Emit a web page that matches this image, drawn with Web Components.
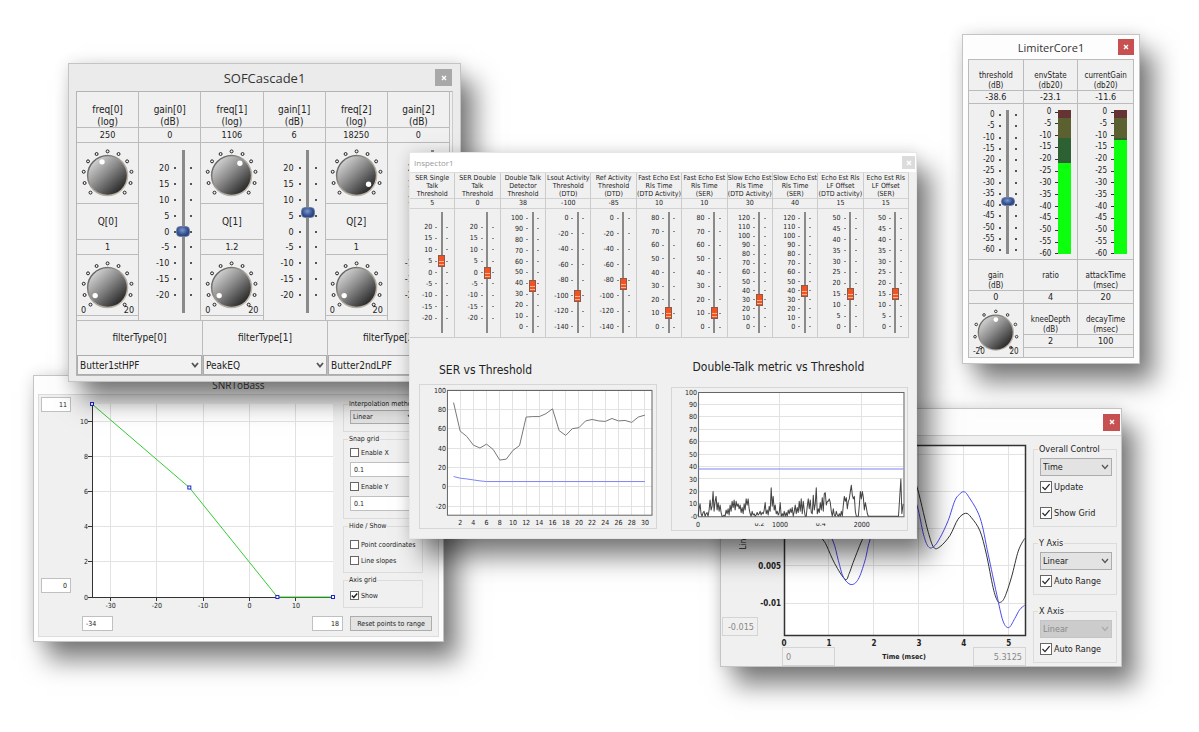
<!DOCTYPE html>
<html lang="en">
<head>
<meta charset="utf-8">
<meta name="viewport" content="width=device-width, initial-scale=1">
<title>Audio tuning inspectors</title>
<style>
  body {
    margin: 0;
    background: #fff;
    color: #222;
    font-family: "DejaVu Sans Condensed", "DejaVu Sans", "Noto Sans", sans-serif;
    font-stretch: condensed;
  }
</style>
</head>
<body>
<tuning-desktop></tuning-desktop>

<script>
// Shared base: every element renders once, from its own attributes.
class BaseElement extends HTMLElement {
    constructor() {
        super();
        this.attachShadow({ mode: 'open' });
    }

    connectedCallback() {
        this.shadowRoot.innerHTML = `<style>${this.styles()}</style>${this.html()}`;
        this.setup();
    }

    setup() {}

    num(name, fallback = 0) {
        return this.hasAttribute(name) ? Number(this.getAttribute(name)) : fallback;
    }

    text(name) {
        return this.getAttribute(name) || '';
    }
}

function scaleValues(from, to, step) {
    const values = [];
    for (let v = from; v >= to; v -= step) {
        values.push(v);
    }
    return values;
}

class ToolWindow extends BaseElement {
    styles() {
        return `
          :host {
            display: block;
            box-sizing: border-box;
            border: 1px solid var(--frame-line, #c4c4c4);
            background: var(--frame, #fdfdfd);
            box-shadow: 14px 18px 24px rgba(0, 0, 0, .5), 0 0 14px rgba(0, 0, 0, .12);
          }
          header {
            display: grid;
            grid-template-columns: 1fr auto 1fr;
            align-items: center;
            height: var(--bar, 24px);
            padding: var(--bar-pad, 0 5px);
            font-family: "Open Sans", "Noto Sans", sans-serif;
            font-stretch: normal;
          }
          h1 {
            grid-column: 2;
            margin: 0;
            font-size: var(--title-size, 11px);
            font-weight: 400;
            color: var(--title-color, #333);
          }
          :host([align="start"]) header { grid-template-columns: 0 auto 1fr; }
          button {
            grid-column: 3;
            justify-self: end;
            width: var(--close-size, 16px);
            height: var(--close-size, 16px);
            padding: 0;
            border: 0;
            background: var(--close, #c75050);
            display: grid;
            place-items: center;
          }
          svg { width: 6px; height: 6px; }
          .body {
            margin: var(--body-margin, 0);
            background: #f0f0f0;
          }
        `;
    }

    html() {
        const heading = this.hasAttribute('heading') ? `<h1>${this.text('heading')}</h1>` : '';
        return `
          <header>
            ${heading}
            <button type="button" aria-label="Close">
              <svg viewBox="0 0 6 6"><path d="M1 1 5 5M5 1 1 5" stroke="#fff" stroke-width="1.4" fill="none"/></svg>
            </button>
          </header>
          <div class="body"><slot></slot></div>
        `;
    }
}

class ParamCell extends BaseElement {
    styles() {
        return `
          :host { display: block; min-width: 0; }
          .name {
            display: flex;
            flex-direction: column;
            align-items: center;
            box-sizing: border-box;
            height: var(--head, 36px);
            padding-top: var(--head-pad, 12px);
            border-bottom: 1px solid var(--line, #bbb);
            font-size: var(--name-size, 10px);
            line-height: var(--name-line, 12px);
            white-space: nowrap;
            overflow-x: visible;
            overflow-y: clip;
          }
          .name span { flex: none; }
          output {
            display: block;
            box-sizing: border-box;
            height: var(--value-row, 15px);
            line-height: calc(var(--value-row, 15px) - 1px);
            border-bottom: 1px solid var(--line, #bbb);
            font-size: var(--value-size, 9px);
            text-align: center;
          }
        `;
    }

    html() {
        const lines = this.text('name').split('|').map(l => `<span>${l}</span>`).join('');
        return `<div class="name">${lines}</div><output>${this.text('value')}</output><slot></slot>`;
    }
}

class LevelSlider extends BaseElement {
    styles() {
        return `
          :host {
            --thumb-w: 14px;
            --thumb-h: 11px;
            --thumb: radial-gradient(ellipse at 45% 35%, #7d97cf, #34508f 55%, #1f3361);
            display: grid;
            grid-template-columns: 1fr auto auto;
            padding: var(--slider-pad, 7px 8px 7px 0);
          }
          :host([kind="block"]) {
            --thumb-w: 7px;
            --thumb-h: 12px;
            --thumb: linear-gradient(#f4521f 5px, #ffb08f 5px 6px, #f4521f 6px 8px, #ffb08f 8px 9px, #f4521f 9px);
          }
          div {
            display: flex;
            flex-direction: column;
            justify-content: space-between;
            font-size: var(--scale-size, 9px);
          }
          span {
            display: flex;
            justify-content: flex-end;
            align-items: center;
            gap: var(--dot-gap, 5px);
            height: 8px;
            line-height: 8px;
          }
          span::after {
            content: "";
            width: 2px;
            height: var(--dot, 2px);
            background: var(--dot-color, #555);
          }
          input {
            appearance: none;
            writing-mode: vertical-lr;
            direction: rtl;
            width: var(--thumb-w);
            height: var(--track, 163px);
            margin: 0 var(--track-gap, 0);
            background: linear-gradient(#8a8a8a, #8a8a8a) center / var(--track-w, 3px) 100% no-repeat;
          }
          input::-webkit-slider-thumb {
            appearance: none;
            box-sizing: border-box;
            width: var(--thumb-w);
            height: var(--thumb-h);
            border: 1px solid #6d7fa5;
            border-radius: 4px;
            background: var(--thumb);
          }
          :host([kind="block"]) input::-webkit-slider-thumb {
            border: 1px solid #8a5a4c;
            border-radius: 0;
          }
        `;
    }

    html() {
        const values = scaleValues(this.num('from'), this.num('to'), this.num('step'));
        return `
          <div>${values.map(v => `<span>${v}</span>`).join('')}</div>
          <input type="range" aria-label="${this.text('label')}" step="any"
            min="${this.num('min', this.num('to'))}" max="${this.num('max', this.num('from'))}" value="${this.num('value')}">
          <div>${values.map(() => '<span></span>').join('')}</div>
        `;
    }

    // Line the scale up with the centre of the thumb at both ends.
    setup() {
        const input = this.shadowRoot.querySelector('input');
        const style = getComputedStyle(input);
        const thumb = parseInt(getComputedStyle(this).getPropertyValue('--thumb-h'), 10);
        const travel = parseInt(style.height, 10) - thumb;
        const range = input.max - input.min;
        const top = Math.round(thumb / 2 - 4 + travel * (input.max - this.num('from')) / range);
        const bottom = Math.floor(thumb / 2 - 4 + travel * (this.num('to') - input.min) / range);
        this.shadowRoot.querySelectorAll('div').forEach(div => {
            div.style.padding = `${top}px 0 ${bottom}px`;
        });
    }
}

class LevelMeter extends BaseElement {
    styles() {
        return `
          :host {
            display: grid;
            grid-template-columns: 1fr 13px;
            padding: 4px 6px 0 0;
          }
          .scale {
            display: flex;
            flex-direction: column;
            justify-content: space-between;
            height: 150px;
            font-size: var(--scale-size, 8px);
          }
          .scale span {
            display: flex;
            justify-content: flex-end;
            align-items: center;
            gap: 4px;
            height: 8px;
            line-height: 8px;
          }
          .scale span::after {
            content: "";
            width: 3px;
            height: 1px;
            background: #333;
          }
          .bar {
            display: flex;
            flex-direction: column;
            justify-content: flex-end;
            margin: 2px 0 4px;
            background: linear-gradient(#663333 8px, #5a6030 8px 28px, #2d6033 28px);
          }
          .bar i {
            height: var(--level);
            background: #0cff0c;
          }
        `;
    }

    html() {
        return `
          <div class="scale">${scaleValues(0, -60, 5).map(v => `<span>${v}</span>`).join('')}</div>
          <div class="bar" role="meter" aria-label="${this.text('label')}" aria-valuemin="-60" aria-valuemax="0"
            aria-valuenow="${this.num('value')}" style="--level: ${this.text('level')}"><i></i></div>
        `;
    }
}

class RotaryKnob extends BaseElement {
    styles() {
        return `
          :host {
            display: grid;
            height: var(--knob-row, 60px);
            border-bottom: 1px solid var(--line, #bbb);
          }
          svg, input, div { grid-area: 1 / 1; }
          svg { width: 100%; display: block; }
          input {
            width: 100%;
            height: 100%;
            margin: 0;
            opacity: 0;
          }
          div {
            display: flex;
            justify-content: space-between;
            align-self: end;
            padding: 0 4px;
            font-size: var(--scale-size, 9px);
            line-height: 10px;
          }
        `;
    }

    html() {
        const count = this.num('dots', 11);
        const dots = [];
        for (let i = 0; i < count; i++) {
            const angle = (-135 + 270 * i / (count - 1)) * Math.PI / 180;
            dots.push(`<circle cx="${24.5 * Math.sin(angle)}" cy="${-24.5 * Math.cos(angle)}" r="1.5"/>`);
        }
        const turn = this.num('angle') * Math.PI / 180;
        const ends = this.hasAttribute('low')
            ? `<div><span>${this.text('low')}</span><span>${this.text('high')}</span></div>` : '';
        return `
          <svg viewBox="-31 -33 62 60">
            <defs>
              <linearGradient id="face" x1=".1" y1=".1" x2=".85" y2=".9">
                <stop offset="0" stop-color="#d8d8d8"/>
                <stop offset=".45" stop-color="#8c8c8c"/>
                <stop offset="1" stop-color="#262626"/>
              </linearGradient>
              <linearGradient id="rim" x1="0" y1="0" x2="1" y2="1">
                <stop offset="0" stop-color="#444"/>
                <stop offset=".5" stop-color="#aaa39b"/>
                <stop offset="1" stop-color="#c9beb2"/>
              </linearGradient>
            </defs>
            <g fill="#f0f0f0" stroke="#222">${dots.join('')}</g>
            <circle r="21" fill="url(#rim)"/>
            <circle r="19.5" fill="url(#face)"/>
            <circle cx="${15 * Math.sin(turn)}" cy="${-15 * Math.cos(turn)}" r="2.7" fill="#fff"/>
          </svg>
          ${ends}
          <input type="range" aria-label="${this.text('label')}" min="-135" max="135" value="${this.num('angle')}">
        `;
    }
}

class DropDown extends BaseElement {
    styles() {
        return `
          :host { display: grid; }
          select, svg { grid-area: 1 / 1; }
          select {
            appearance: none;
            width: 100%;
            min-width: 0;
            height: var(--select-row, 18px);
            margin: 0;
            padding: 0 2px;
            border: 1px solid #acacac;
            border-radius: 0;
            background: var(--select-fill, #e3e3e3);
            color: #222;
            font: inherit;
            font-size: var(--control-size, 9px);
          }
          select:disabled {
            border-color: #c4c4c4;
            background: #ccc;
            color: #8a8a8a;
            opacity: 1;
          }
          svg {
            width: 8px;
            height: 6px;
            align-self: center;
            justify-self: end;
            margin-right: 3px;
            pointer-events: none;
          }
          path { fill: none; stroke: var(--chevron, #555); stroke-width: var(--chevron-w, 1.2); }
        `;
    }

    html() {
        return `
          <select aria-label="${this.text('label')}" ${this.hasAttribute('disabled') ? 'disabled' : ''}>
            <option>${this.text('value')}</option>
          </select>
          <svg viewBox="0 0 8 6"><path d="M1 1 4 4.5 7 1"/></svg>
        `;
    }
}

class CheckItem extends BaseElement {
    styles() {
        return `
          :host { display: block; }
          label {
            display: flex;
            align-items: center;
            gap: 2px;
            height: var(--check, 12px);
            font-size: var(--control-size, 9px);
            white-space: nowrap;
          }
          .box { display: grid; }
          input, svg { grid-area: 1 / 1; }
          input {
            appearance: none;
            box-sizing: border-box;
            width: var(--check, 12px);
            height: var(--check, 12px);
            margin: 0;
            border: 1px solid #666;
            background: #fff;
          }
          svg {
            width: var(--check, 12px);
            height: var(--check, 12px);
            visibility: hidden;
            pointer-events: none;
          }
          path { fill: none; stroke: #222; stroke-width: var(--tick, 1.2); }
          input:checked + svg { visibility: visible; }
        `;
    }

    html() {
        return `
          <label>
            <span class="box">
              <input type="checkbox" ${this.hasAttribute('checked') ? 'checked' : ''}>
              <svg viewBox="0 0 12 12"><path d="M2.5 6 5 8.6 9.6 3.2"/></svg>
            </span>
            ${this.text('label')}
          </label>
        `;
    }
}

class GroupBox extends BaseElement {
    styles() {
        return `
          :host { display: block; }
          fieldset {
            min-width: 0;
            margin: 0;
            padding: var(--group-top, 3px) 4px 7px 6px;
            border: 1px solid #dcdcdc;
          }
          legend {
            padding: 0 1px;
            margin-left: -2px;
            font-size: var(--control-size, 9px);
            line-height: var(--legend, 11px);
            white-space: nowrap;
          }
          .items {
            display: flex;
            flex-direction: column;
            gap: var(--group-gap, 5px);
          }
        `;
    }

    html() {
        return `
          <fieldset>
            <legend>${this.text('label')}</legend>
            <div class="items"><slot></slot></div>
          </fieldset>
        `;
    }
}

class NumberBox extends BaseElement {
    styles() {
        return `
          :host { display: block; }
          input {
            display: block;
            box-sizing: border-box;
            width: 100%;
            height: var(--box-row, 15px);
            padding: 0 3px;
            border: 1px solid #c0c0c0;
            background: #fff;
            color: #222;
            font: inherit;
            font-size: var(--control-size, 9px);
          }
          :host([align="end"]) input { text-align: right; }
          input:disabled {
            border-color: #d4d4d4;
            background: #f0f0f0;
            color: #888;
          }
        `;
    }

    html() {
        return `<input type="text" aria-label="${this.text('label')}" value="${this.text('value')}"
          ${this.hasAttribute('disabled') ? 'disabled' : ''}>`;
    }
}

// Chart settings: size of the drawing, plot area [left, top, width, height], axis ranges and series.
const CHARTS = {
    ser: {
        size: [236, 143], area: [27, 5, 205, 125], x: [0, 31], y: [-29, 100],
        xTicks: Array.from({ length: 15 }, (_, i) => 2 * i + 2),
        yTicks: [100, 80, 60, 40, 20, 0, -20],
        border: '#666', fontSize: 7, labelDrop: 8,
        series: [
            {
                color: '#777',
                points: [87, 57.5, 52, 43, 40, 44, 38.5, 27.5, 28.5, 37.5, 42.5, 72, 72.5, 72.5, 75.5, 80.5, 58, 53, 60, 61,
                    68, 69.5, 68, 67.5, 70.5, 68, 68.5, 66.5, 72, 74].map((y, i) => [i + 1, y])
            },
            { color: '#7d84f5', points: [[1, 10.5], [2, 8.8], [3, 8], [4, 7], [5, 6], [6, 5.3], [30, 5.3]] }
        ]
    },
    doubleTalk: {
        size: [235, 142], area: [26, 4, 205, 124], x: [0, 2510], y: [0, 100],
        xTicks: [0, 1000, 2000],
        yTicks: [100, 90, 80, 70, 60, 50, 40, 30, 20, 10, 0],
        yFormat: v => (v === 0 ? '-0' : String(v)),
        border: '#666', fontSize: 7, labelDrop: 8,
        clipped: [['0.2', 750], ['0.4', 1500]],
        series: [
            { color: '#7d84f5', points: [[0, 38], [2510, 38]] },
            {
                color: '#444',
                points: [
                    0, 6, 10, 2, 0, 3, 4, 0, 2, 3, 0, 5, 13, 5, 8, 20, 4, 12, 16, 5, 11, 4, 9, 3,
                    0, 0, 1, 0, 5, 2, 6, 1, 9, 4, 12, 7, 13, 5, 12, 8, 10, 6, 9, 3,
                    7, 2, 10, 5, 14, 9, 14, 6, 2, 0, 4, 1, 2, 0, 1, 3, 1, 2, 4, 1, 3, 2, 5,
                    11, 2, 5, 1, 8, 4, 23, 8, 16, 5, 9, 2, 4, 1, 3, 11,
                    0, 2, 0, 4, 0, 3, 0, 5, 2, 6, 3, 7, 0, 4, 9, 2, 7, 3, 12, 4, 14, 2, 12, 5,
                    0, 0, 8, 14, 6, 13, 3, 2, 17, 5, 10, 23, 2, 6, 3, 11, 5, 15, 4, 18, 19, 9, 12, 12, 14, 11, 4,
                    0, 6, 1, 0, 4, 1, 0, 2, 0, 4, 0, 9, 16, 12, 15, 6, 12, 14, 20, 25, 17, 14, 16, 4,
                    0, 0, 0, 9, 20, 14, 20, 15, 5, 11, 7, 2, 0
                ].map((y, i) => [i * 12.24, y]).concat([[2449, 0], [2478, 30], [2490, 2], [2506, 10]])
            }
        ]
    },
    snr: {
        size: [271, 221], area: [20, 9, 241, 193], x: [-34, 18], y: [0, 11],
        xTicks: [-30, -20, -10, 0, 10],
        yTicks: [10, 8, 6, 4, 2, 0],
        axes: true, fontSize: 7, labelDrop: 8, yGap: 4,
        series: [
            { color: '#3c3', markers: true, points: [[-34, 11], [-13, 6.24], [6, 0], [18, 0]] }
        ]
    },
    scope: {
        size: [275, 213], area: [26, 9, 241, 190], x: [0, 5.36], y: [-14.3, 11.3],
        xTicks: [0, 1, 2, 3, 4, 5],
        yTicks: [10, 5, 0, -5, -10],
        yFormat: v => (v < 0 ? String(v / 1000) : ''),
        border: '#333', borderWidth: 1.5, fontSize: 8, bold: true, labelDrop: 8, yGap: 3,
        series: [
            {
                color: '#333', smooth: true,
                points: [[0, 1], [0.6, 0.5], [0.87, -1.5], [0.95, -2.3], [1.13, -4.7], [1.36, -6.8], [1.45, -6], [1.54, -4.5],
                    [1.73, -1.6], [2, 2], [2.5, 8], [2.8, 8], [2.96, 5.6], [3.1, 2.2], [3.21, -0.5], [3.33, -2.5], [3.47, -2.4],
                    [3.69, -0.9], [3.87, 1.3], [4.04, 2.1], [4.17, 1.5], [4.36, -0.3], [4.5, -3.4], [4.65, -7.9], [4.74, -9.6],
                    [4.81, -9.9], [4.91, -9.2], [5.06, -6.5], [5.21, -3], [5.35, -1.3]]
            },
            {
                color: '#4a4af0', smooth: true,
                points: [[0, 1], [0.8, 1], [1.08, -1.5], [1.21, -4.3], [1.32, -6.5], [1.49, -7.5], [1.65, -6.8], [1.8, -4.3],
                    [1.91, -1.5], [2.2, 4], [2.7, 7], [2.96, 3.1], [3.1, -0.7], [3.21, -2.4], [3.33, -2.4], [3.47, -1.2],
                    [3.65, 1.1], [3.8, 3.8], [3.91, 4.7], [4, 5], [4.1, 4.4], [4.36, 1.5], [4.54, -3.4], [4.73, -8.8],
                    [4.87, -12.4], [5, -13.3], [5.13, -12.1], [5.24, -10.9], [5.35, -10.3]]
            }
        ]
    }
};

class LinePlot extends BaseElement {
    styles() {
        return `
          :host { display: block; min-width: 0; }
          svg { display: block; width: 100%; }
          text { fill: #222; }
          .crisp { shape-rendering: crispEdges; }
        `;
    }

    html() {
        const c = CHARTS[this.text('chart')];
        const [left, top, width, height] = c.area;
        const bottom = top + height;
        const px = v => left + (v - c.x[0]) / (c.x[1] - c.x[0]) * width;
        const py = v => bottom - (v - c.y[0]) / (c.y[1] - c.y[0]) * height;
        const format = c.yFormat || String;

        const grid = c.xTicks.map(v => `M${px(v)} ${top}V${bottom}`)
            .concat(c.yTicks.map(v => `M${left} ${py(v)}H${left + width}`)).join('');
        const xLabels = c.xTicks.map(v =>
            `<text x="${px(v)}" y="${bottom + c.labelDrop}" dy=".36em" text-anchor="middle">${v}</text>`).join('');
        const yLabels = c.yTicks.filter(v => format(v)).map(v =>
            `<text x="${left - (c.yGap || 1)}" y="${py(v)}" dy=".36em" text-anchor="end">${format(v)}</text>`).join('');

        let frame = '';
        if (c.border) {
            frame = `<rect x="${left + 0.5}" y="${top + 0.5}" width="${width}" height="${height}" fill="none"
              stroke="${c.border}" stroke-width="${c.borderWidth || 1}"/>`;
        }
        if (c.axes) {
            const ticks = c.xTicks.map(v => `M${px(v)} ${bottom}v4`).concat(c.yTicks.map(v => `M${left} ${py(v)}h-4`)).join('');
            frame = `<path class="crisp" d="M${left} ${top}V${bottom}H${left + width}${ticks}" fill="none" stroke="#333"/>`;
        }

        const clipTop = bottom + c.labelDrop - 1;
        const clipped = (c.clipped || []).map(([label, v]) =>
            `<text x="${px(v)}" y="${clipTop}" dy=".36em" text-anchor="middle" clip-path="url(#lower)">${label}</text>`).join('');

        return `
          <svg viewBox="0 0 ${c.size[0]} ${c.size[1]}" font-size="${c.fontSize}" font-weight="${c.bold ? 700 : 400}">
            <clipPath id="lower"><rect x="0" y="${clipTop}" width="${c.size[0]}" height="9"/></clipPath>
            <rect x="${left}" y="${top}" width="${width}" height="${height}" fill="#fff"/>
            <path class="crisp" d="${grid}" stroke="#e2e2e2" fill="none"/>
            ${frame}
            ${c.series.map(s => this.line(s, px, py)).join('')}
            ${xLabels}${yLabels}${clipped}
          </svg>
        `;
    }

    line(series, px, py) {
        const pts = series.points.map(([x, y]) => [px(x), py(y)]);
        let d = `M${pts[0]}`;
        for (let i = 1; i < pts.length; i++) {
            if (!series.smooth) {
                d += `L${pts[i]}`;
                continue;
            }
            const [p0, p1, p2, p3] = [pts[Math.max(i - 2, 0)], pts[i - 1], pts[i], pts[Math.min(i + 1, pts.length - 1)]];
            const c1 = [p1[0] + (p2[0] - p0[0]) / 6, p1[1] + (p2[1] - p0[1]) / 6];
            const c2 = [p2[0] - (p3[0] - p1[0]) / 6, p2[1] - (p3[1] - p1[1]) / 6];
            d += `C${c1} ${c2} ${p2}`;
        }
        const markers = series.markers ? pts.map(([x, y]) =>
            `<rect x="${x - 1.5}" y="${y - 1.5}" width="3" height="3" fill="#fff" stroke="#22d"/>`).join('') : '';
        return `<path d="${d}" fill="none" stroke="${series.color}" stroke-linejoin="round"/>${markers}`;
    }
}

class CascadePanel extends BaseElement {
    styles() {
        return `
          :host { display: block; border: 1px solid #b4b4b4; border-right-color: #ccc; }
          .bands {
            display: grid;
            grid-template-columns: repeat(6, 1fr);
            padding-right: 2px;
            overflow: hidden;
          }
          .col { border-right: 1px solid #bbb; min-height: 227px; }
          .filters {
            display: grid;
            grid-template-columns: repeat(3, 1fr);
            border-top: 1px solid #bbb;
            --select-row: 20px;
            --select-fill: #f2f2f2;
            --control-size: 10px;
            --chevron-w: 1.8;
          }
          .filters div + div { border-left: 1px solid #bbb; }
          .label {
            display: block;
            font-size: 10px;
            line-height: 34px;
            text-align: center;
          }
        `;
    }

    html() {
        const bands = [
            { freq: 250, angle: -22, gain: 0, q: 1, type: 'Butter1stHPF' },
            { freq: 1106, angle: 34, gain: 6, q: 1.2, type: 'PeakEQ' },
            { freq: 18250, angle: 126, gain: 0, q: 1, type: 'Butter2ndLPF' }
        ];
        const columns = bands.map((b, i) => `
          <div class="col">
            <param-cell name="freq[${i}]|(log)" value="${b.freq}">
              <rotary-knob label="freq[${i}]" angle="${b.angle}"></rotary-knob>
            </param-cell>
            <param-cell name="Q[${i}]" value="${b.q}">
              <rotary-knob label="Q[${i}]" angle="-123" low="0" high="20"></rotary-knob>
            </param-cell>
          </div>
          <div class="col">
            <param-cell name="gain[${i}]|(dB)" value="${b.gain}">
              <level-slider label="gain[${i}]" from="20" to="-20" step="5" min="-24" max="24" value="${b.gain}"></level-slider>
            </param-cell>
          </div>`).join('');
        const filters = bands.map((b, i) => `
          <div>
            <span class="label">filterType[${i}]</span>
            <drop-down label="filterType[${i}]" value="${b.type}"></drop-down>
          </div>`).join('');
        return `<div class="bands">${columns}</div><div class="filters">${filters}</div>`;
    }
}

class LimiterPanel extends BaseElement {
    styles() {
        return `
          :host {
            --head: 31px;
            --head-pad: 11px;
            --name-size: 8px;
            --name-line: 10px;
            --value-row: 13px;
            --value-size: 9px;
            --scale-size: 8px;
            --slider-pad: 6px 6px 5px 0;
            --track: 144px;
            --dot-gap: 4px;
            --knob-row: 53px;
            display: grid;
            grid-template-columns: repeat(3, 1fr);
            grid-template-rows: auto auto auto 1fr;
            border: 1px solid #bbb;
          }
          level-slider { --thumb-h: 9px; }
          rotary-knob { border-bottom: 0; }
          .cell { border-right: 1px solid #bbb; min-width: 0; }
          .last { border-right: 0; }
          .top { border-bottom: 1px solid #bbb; }
          .knob { grid-row: span 3; }
        `;
    }

    html() {
        return `
          <div class="cell top">
            <param-cell name="threshold|(dB)" value="-38.6">
              <level-slider label="threshold" from="0" to="-60" step="5" value="-38.6"></level-slider>
            </param-cell>
          </div>
          <div class="cell top">
            <param-cell name="envState|(db20)" value="-23.1"><level-meter label="envState" value="-23.1" level="91px"></level-meter></param-cell>
          </div>
          <div class="cell top last">
            <param-cell name="currentGain|(db20)" value="-11.6"><level-meter label="currentGain" value="-11.6" level="114px"></level-meter></param-cell>
          </div>
          <div class="cell knob">
            <param-cell name="gain|(dB)" value="0">
              <rotary-knob label="gain" angle="0" dots="9" low="-20" high="20"></rotary-knob>
            </param-cell>
          </div>
          <div class="cell"><param-cell name="ratio" value="4"></param-cell></div>
          <div class="cell last"><param-cell name="attackTime|(msec)" value="20"></param-cell></div>
          <div class="cell"><param-cell name="kneeDepth|(dB)" value="2"></param-cell></div>
          <div class="cell last"><param-cell name="decayTime|(msec)" value="100"></param-cell></div>
        `;
    }
}

class InspectorPanel extends BaseElement {
    styles() {
        return `
          :host {
            --head: 26px;
            --head-pad: 1px;
            --name-size: 7px;
            --name-line: 8px;
            --value-row: 10px;
            --value-size: 7px;
            --scale-size: 7px;
            --slider-pad: 3px 6px 4px 0;
            --track: 121px;
            --track-w: 2px;
            --track-gap: 1px;
            --dot-gap: 3px;
            --dot: 1px;
            --dot-color: #888;
            --line: #d2d2d2;
            display: block;
            padding-bottom: 7px;
          }
          .params {
            display: grid;
            grid-template-columns: repeat(11, 1fr);
            margin-right: 7px;
            border-top: 1px solid #ddd;
            border-bottom: 1px solid #ccc;
          }
          param-cell { border-right: 1px solid #ccc; }
          .charts {
            display: grid;
            grid-template-columns: 1fr 1fr;
            align-items: start;
            gap: 14px;
            padding: 20px 8px 0 9px;
          }
          figure { margin: 0; }
          figcaption {
            padding: 4px 0 6px 20px;
            font-size: 12px;
            line-height: 16px;
          }
          .second figcaption { padding: 1px 0 12px 22px; }
          line-plot { border: 1px solid #d6d6d6; }
        `;
    }

    html() {
        const params = [
            ['SER Single|Talk|Threshold', 5, 20, -20, 5, 24],
            ['SER Double|Talk|Threshold', 0, 20, -20, 5, 24],
            ['Double Talk|Detector|Threshold', 38, 100, 0, 10],
            ['Lsout Activity|Threshold|(DTD)', -100, 0, -140, 20],
            ['Ref Activity|Threshold|(DTD)', -85, 0, -140, 20],
            ['Fast Echo Est|Rls Time|(DTD Activity)', 10, 80, 0, 10],
            ['Fast Echo Est|Rls Time|(SER)', 10, 80, 0, 10],
            ['Slow Echo Est|Rls Time|(DTD Activity)', 30, 120, 0, 10],
            ['Slow Echo Est|Rls Time|(SER)', 40, 120, 0, 10],
            ['Echo Est Rls|LF Offset|(DTD activity)', 15, 50, 0, 5],
            ['Echo Est Rls|LF Offset|(SER)', 15, 50, 0, 5]
        ];
        const cells = params.map(([name, value, from, to, step, limit]) => `
          <param-cell name="${name}" value="${value}">
            <level-slider kind="block" label="${name.replaceAll('|', ' ')}" from="${from}" to="${to}" step="${step}"
              min="${limit ? -limit : to}" max="${limit || from}" value="${value}"></level-slider>
          </param-cell>`).join('');
        return `
          <div class="params">${cells}</div>
          <div class="charts">
            <figure><figcaption>SER vs Threshold</figcaption><line-plot chart="ser"></line-plot></figure>
            <figure class="second"><figcaption>Double-Talk metric vs Threshold</figcaption><line-plot chart="doubleTalk"></line-plot></figure>
          </div>
        `;
    }
}

class CurvePanel extends BaseElement {
    styles() {
        return `
          :host {
            --control-size: 7px;
            --legend: 8px;
            --check: 9px;
            --select-row: 14px;
            --tick: 2;
            display: block;
            border: 1px solid #dcdcdc;
            padding-bottom: 5px;
          }
          .main {
            display: grid;
            grid-template-columns: 33px 1fr 95px;
          }
          .range {
            display: flex;
            flex-direction: column;
            justify-content: space-between;
            padding: 2px 1px 23px 2px;
          }
          .groups {
            display: flex;
            flex-direction: column;
            gap: 3px;
            padding: 5px 15px 0 0;
          }
          .method { --group-top: 2px; }
          .snap { --group-top: 5px; }
          .show { --group-top: 10px; --group-gap: 7px; }
          .axis { --group-top: 7px; }
          .foot {
            display: flex;
            align-items: center;
            padding: 0 6px 0 43px;
          }
          .foot number-box { width: 31px; }
          .foot number-box:nth-child(2) { margin-left: auto; }
          button {
            width: 82px;
            height: 15px;
            margin-left: 7px;
            padding: 0;
            border: 1px solid #adadad;
            background: #e3e3e3;
            color: #222;
            font: inherit;
            font-size: 7px;
          }
        `;
    }

    html() {
        return `
          <div class="main">
            <div class="range">
              <number-box align="end" label="Output maximum" value="11"></number-box>
              <number-box align="end" label="Output minimum" value="0"></number-box>
            </div>
            <line-plot chart="snr"></line-plot>
            <div class="groups">
              <group-box class="method" label="Interpolation method"><drop-down label="Interpolation method" value="Linear"></drop-down></group-box>
              <group-box class="snap" label="Snap grid">
                <check-item label="Enable X"></check-item>
                <number-box label="Snap X" value="0.1"></number-box>
                <check-item label="Enable Y"></check-item>
                <number-box label="Snap Y" value="0.1"></number-box>
              </group-box>
              <group-box class="show" label="Hide / Show">
                <check-item label="Point coordinates"></check-item>
                <check-item label="Line slopes"></check-item>
              </group-box>
              <group-box class="axis" label="Axis grid"><check-item label="Show" checked></check-item></group-box>
            </div>
          </div>
          <div class="foot">
            <number-box label="Input minimum" value="-34"></number-box>
            <number-box align="end" label="Input maximum" value="18"></number-box>
            <button type="button">Reset points to range</button>
          </div>
        `;
    }
}

class ScopePanel extends BaseElement {
    styles() {
        return `
          :host {
            --box-row: 19px;
            display: grid;
            grid-template-columns: 1fr 84px;
            padding-right: 4px;
            border-top: 1px solid #d0d0d0;
          }
          .plot {
            display: grid;
            grid-template-columns: 37px 1fr;
          }
          .left {
            display: flex;
            flex-direction: column;
            justify-content: flex-end;
            align-items: center;
            gap: 68px;
            padding: 0 0 13px 1px;
          }
          .left span {
            writing-mode: vertical-rl;
            transform: rotate(180deg);
            margin-left: 7px;
            font-size: 8px;
            line-height: 10px;
          }
          .left number-box { width: 100%; }
          .foot {
            display: flex;
            justify-content: space-between;
            align-items: center;
            margin-top: -2px;
            padding: 0 7px 0 61px;
            font-size: 7px;
          }
          .foot number-box { width: 53px; }
          .groups {
            display: flex;
            flex-direction: column;
            gap: 11px;
            padding: 8px 0 2px;
          }
          .apart { margin-top: 9px; }
        `;
    }

    html() {
        return `
          <div>
            <div class="plot">
              <div class="left">
                <span>Linear</span>
                <number-box disabled align="end" label="Y minimum" value="-0.015"></number-box>
              </div>
              <line-plot chart="scope"></line-plot>
            </div>
            <div class="foot">
              <number-box disabled label="X minimum" value="0"></number-box>
              <b>Time (msec)</b>
              <number-box disabled align="end" label="X maximum" value="5.3125"></number-box>
            </div>
          </div>
          <div class="groups">
            <group-box label="Overall Control">
              <drop-down label="Domain" value="Time"></drop-down>
              <check-item label="Update" checked></check-item>
              <check-item class="apart" label="Show Grid" checked></check-item>
            </group-box>
            <group-box label="Y Axis">
              <drop-down label="Y scale" value="Linear"></drop-down>
              <check-item label="Auto Range" checked></check-item>
            </group-box>
            <group-box label="X Axis">
              <drop-down disabled label="X scale" value="Linear" style="--chevron: #aaa"></drop-down>
              <check-item label="Auto Range" checked></check-item>
            </group-box>
          </div>
        `;
    }
}

class TuningDesktop extends BaseElement {
    styles() {
        return `
          :host {
            display: block;
            position: relative;
            min-height: 100vh;
            overflow: hidden;
          }
          tool-window { position: absolute; }
          .snr {
            left: 33px;
            top: 375px;
            width: 411px;
            --bar: 18px;
            --title-size: 10px;
            --title-color: #444;
            --body-margin: 0 4px 4px;
          }
          .scope {
            left: 720px;
            top: 408px;
            width: 402px;
            --bar: 26px;
            --bar-pad: 0 1px;
            --close-size: 17px;
          }
          .cascade {
            left: 68px;
            top: 63px;
            width: 393px;
            --frame: #ebebeb;
            --bar: 27px;
            --bar-pad: 0 8px;
            --title-size: 13px;
            --close: #a8a8a8;
            --close-size: 17px;
            --body-margin: 0 7px 5px;
          }
          .inspector {
            left: 409px;
            top: 152px;
            width: 508px;
            --frame: #fff;
            --frame-line: #e6e6e6;
            --bar: 19px;
            --bar-pad: 0 1px 0 4px;
            --title-size: 8px;
            --title-color: #999;
            --close: #dcdcdc;
            --close-size: 13px;
          }
          .limiter {
            left: 962px;
            top: 34px;
            width: 178px;
            --body-margin: 0 5px;
            padding-bottom: 5px;
          }
        `;
    }

    html() {
        return `
          <tool-window class="snr" heading="SNRToBass"><curve-panel></curve-panel></tool-window>
          <tool-window class="scope"><scope-panel></scope-panel></tool-window>
          <tool-window class="cascade" heading="SOFCascade1"><cascade-panel></cascade-panel></tool-window>
          <tool-window class="inspector" heading="Inspector1" align="start"><inspector-panel></inspector-panel></tool-window>
          <tool-window class="limiter" heading="LimiterCore1"><limiter-panel></limiter-panel></tool-window>
        `;
    }
}

customElements.define('tool-window', ToolWindow);
customElements.define('param-cell', ParamCell);
customElements.define('level-slider', LevelSlider);
customElements.define('level-meter', LevelMeter);
customElements.define('rotary-knob', RotaryKnob);
customElements.define('drop-down', DropDown);
customElements.define('check-item', CheckItem);
customElements.define('group-box', GroupBox);
customElements.define('number-box', NumberBox);
customElements.define('line-plot', LinePlot);
customElements.define('cascade-panel', CascadePanel);
customElements.define('limiter-panel', LimiterPanel);
customElements.define('inspector-panel', InspectorPanel);
customElements.define('curve-panel', CurvePanel);
customElements.define('scope-panel', ScopePanel);
customElements.define('tuning-desktop', TuningDesktop);
</script>
</body>
</html>
